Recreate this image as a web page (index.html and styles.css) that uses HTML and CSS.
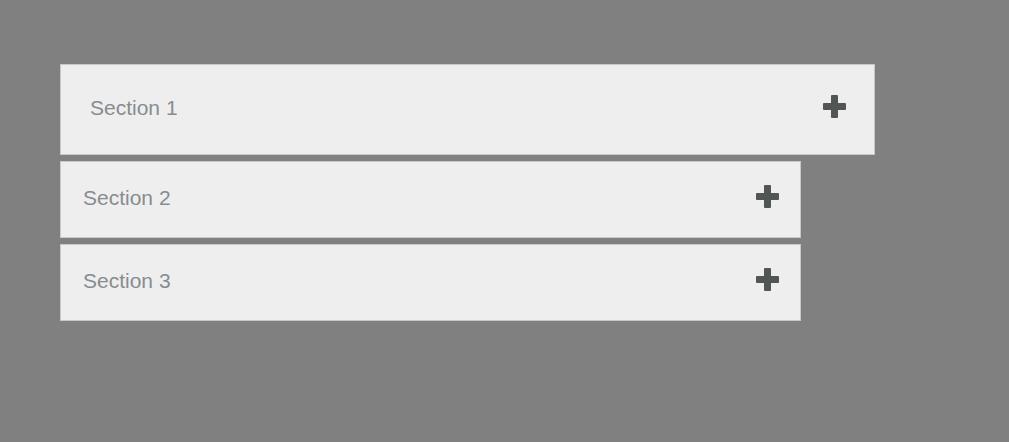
FILE: index.html
```html
<!DOCTYPE html>
<html>
<head>
<meta charset="utf-8">
<link rel="stylesheet" href="styles.css">
</head>
<body>
<div class="accordion">
  <div class="section section-active">
    <span class="title">Section 1</span>
    <svg class="plus" width="23" height="23" viewBox="0 0 23 23"><rect x="8" y="0" width="7" height="23" rx="1"/><rect x="0" y="8" width="23" height="7" rx="1"/></svg>
  </div>
  <div class="section">
    <span class="title">Section 2</span>
    <svg class="plus" width="23" height="23" viewBox="0 0 23 23"><rect x="8" y="0" width="7" height="23" rx="1"/><rect x="0" y="8" width="23" height="7" rx="1"/></svg>
  </div>
  <div class="section">
    <span class="title">Section 3</span>
    <svg class="plus" width="23" height="23" viewBox="0 0 23 23"><rect x="8" y="0" width="7" height="23" rx="1"/><rect x="0" y="8" width="23" height="7" rx="1"/></svg>
  </div>
</div>
</body>
</html>
```
FILE: styles.css
```css
html, body {
  margin: 0;
  padding: 0;
  background: #808080;
  height: 100%;
}
body {
  font-family: "Liberation Sans", Arial, sans-serif;
}
.accordion {
  padding: 64px 0 0 60px;
  display: flex;
  flex-direction: column;
  align-items: flex-start;
  gap: 6px;
}
.section {
  box-sizing: border-box;
  width: 741px;
  height: 77px;
  background: #eeeeee;
  border: 1px solid #c8c8c8;
  display: flex;
  align-items: center;
  justify-content: space-between;
  padding: 0 21px 0 22px;
}
.section-active {
  width: 815px;
  height: 91px;
  padding: 0 28px 0 29px;
}
.title {
  font-size: 21px;
  line-height: 24px;
  color: #878c90;
  margin-bottom: 4px;
}
.plus {
  fill: #515553;
  display: block;
  margin-bottom: 7px;
}
```
